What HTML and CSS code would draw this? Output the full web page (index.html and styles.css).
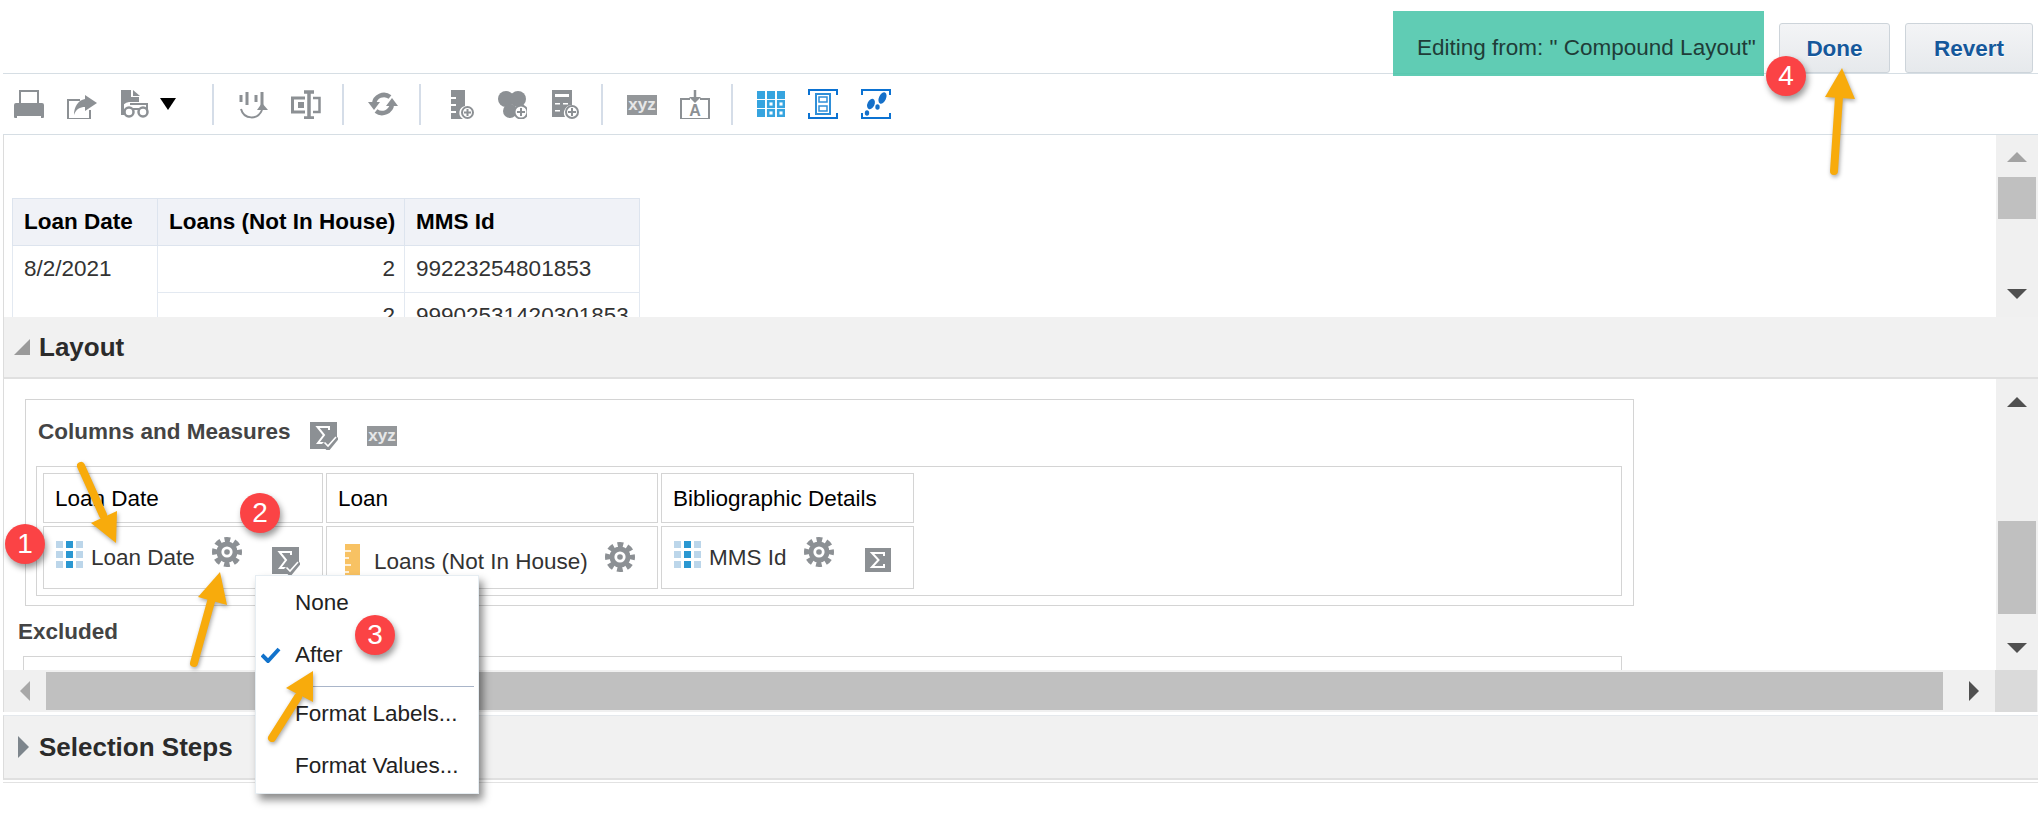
FILE: index.html
```html
<!DOCTYPE html>
<html lang="en">
<head>
<meta charset="utf-8">
<title>Compound Layout editor</title>
<link rel="stylesheet" href="styles.css">
</head>
<body>
<svg class="defs" aria-hidden="true">
  <symbol id="i-gear" viewBox="0 0 30 30">
    <circle cx="15" cy="15" r="12.2" fill="none" stroke="#8c9094" stroke-width="5.6" stroke-dasharray="5.6 3.98" stroke-dashoffset="2.8"/>
    <circle cx="15" cy="15" r="10.5" fill="#8c9094"/>
    <circle cx="15" cy="15" r="5.6" fill="#fff"/>
    <circle cx="15" cy="15" r="2.8" fill="#8c9094"/>
  </symbol>
  <symbol id="i-sigmacheck" viewBox="0 0 28 28">
    <path d="M0 0H27V17L18 27H0z" fill="#8c9094"/>
    <path d="M19 8V5H7.500L14 13L8 21H14" fill="none" stroke="#fff" stroke-width="2"/>
    <path d="M13 21L18 26L27 15" fill="none" stroke="#8c9094" stroke-width="5"/>
    <path d="M14.500 20.500L18 24L26 15" fill="none" stroke="#fff" stroke-width="1.600"/>
  </symbol>
  <symbol id="i-sigma" viewBox="0 0 26 24">
    <rect width="26" height="24" fill="#8c9094"/>
    <path d="M19 8V5H7L13.500 12L7 19H19V16" fill="none" stroke="#fff" stroke-width="2"/>
  </symbol>
  <symbol id="i-xyz" viewBox="0 0 30 20">
    <rect width="30" height="20" fill="#94979a"/>
    <text x="15" y="15" class="xyz-text" text-anchor="middle">xyz</text>
  </symbol>
  <symbol id="i-cols" viewBox="0 0 27 27">
    <g fill="#bcd6ea">
      <rect width="7" height="7"/><rect x="20" width="7" height="7"/>
      <rect y="10" width="7" height="7"/><rect x="20" y="10" width="7" height="7"/>
      <rect y="20" width="7" height="7"/><rect x="20" y="20" width="7" height="7"/>
    </g>
    <g fill="#2a97d1">
      <rect x="10" width="7" height="7"/><rect x="10" y="10" width="7" height="7"/><rect x="10" y="20" width="7" height="7"/>
    </g>
  </symbol>
  <symbol id="i-frame" viewBox="0 0 30 30">
    <path d="M1 6V1H29V6M1 24V29H29V24" fill="none" stroke="#0b72d2" stroke-width="2"/>
  </symbol>
</svg>

<div class="page">
  <header class="topbar">
    <div class="notice">Editing from: " Compound Layout"</div>
    <button class="btn btn-done">Done</button>
    <button class="btn btn-revert">Revert</button>
  </header>

  <nav class="toolbar">
    <div class="tb-group tb-first">
      <svg class="ic" viewBox="0 0 30 30"><path d="M6 14V2H24V14" fill="none" stroke="#8c9094" stroke-width="2"/><path d="M2 14H28Q30 14 30 16V28Q30 29 29 29H27V27H3V29H1Q0 29 0 28V16Q0 14 2 14z" fill="#8c9094"/><rect x="5" y="17" width="20" height="4" fill="#8c9094"/><path d="M3 23H27V27H3z" fill="#8c9094"/></svg>
      <svg class="ic" viewBox="0 0 30 30"><path d="M13 11H1V30H23V21" fill="none" stroke="#8c9094" stroke-width="2"/><path d="M18 6L30 14L18 22V18C13 18 9 20 7 26C7 18 11 11 18 10z" fill="#8c9094"/></svg>
      <svg class="ic" viewBox="0 0 30 30"><path d="M1 1H11V8H19V13H9Q3 14 1 20z" fill="#8c9094"/><path d="M13 1L20 7H13z" fill="#8c9094"/><rect x="1" y="14" width="3" height="12" fill="#8c9094"/><circle cx="9" cy="23" r="4.500" fill="none" stroke="#8c9094" stroke-width="2.500"/><circle cx="23" cy="23" r="4.500" fill="none" stroke="#8c9094" stroke-width="2.500"/><path d="M13 20H19M27 22V15H10" fill="none" stroke="#8c9094" stroke-width="2"/></svg>
      <span class="drop-tri"></span>
    </div>
    <span class="tb-sep"></span>
    <div class="tb-group">
      <svg class="ic" viewBox="0 0 30 30"><path d="M3 6V13M9 3V16M18 6V13M24 3V18" fill="none" stroke="#8c9094" stroke-width="3"/><path d="M3 20C6 31 20 31 24 21" fill="none" stroke="#8c9094" stroke-width="2"/><path d="M19 21H30L24 14z" fill="#8c9094"/></svg>
      <svg class="ic" viewBox="0 0 30 30"><path d="M14 9H1.500V23H14" fill="none" stroke="#8c9094" stroke-width="3"/><rect x="7" y="13" width="6" height="6" fill="#8c9094"/><path d="M22 9H28.500V23H22" fill="none" stroke="#8c9094" stroke-width="2.500"/><path d="M13 3H23M18 3V29M13 29H23" fill="none" stroke="#8c9094" stroke-width="3.500"/></svg>
    </div>
    <span class="tb-sep"></span>
    <div class="tb-group">
      <svg class="ic" viewBox="0 0 30 30"><path d="M6 15A10 10 0 0 1 22 8" fill="none" stroke="#8c9094" stroke-width="4.500"/><path d="M0 13H12L6 21z" fill="#8c9094"/><path d="M24 15A10 10 0 0 1 8 22" fill="none" stroke="#8c9094" stroke-width="4.500"/><path d="M18 17H30L24 9z" fill="#8c9094"/></svg>
    </div>
    <span class="tb-sep"></span>
    <div class="tb-group tb-shift">
      <svg class="ic ic-narrow" viewBox="0 0 23 30"><path d="M0 1H14V17A7 7 0 0 0 12 30H0V24H5V22H0V17H5V15H0V10H5V8H0z" fill="#8c9094"/><circle cx="16.500" cy="23.500" r="5.500" fill="#fff" stroke="#8c9094" stroke-width="2"/><path d="M13 23.500H20M16.500 20V27" stroke="#8c9094" stroke-width="2"/></svg>
      <svg class="ic" viewBox="0 0 30 30"><circle cx="9" cy="10" r="8" fill="#8c9094"/><circle cx="21" cy="10" r="8" fill="#8c9094"/><circle cx="13" cy="22" r="7" fill="#8c9094"/><circle cx="24" cy="23" r="6.500" fill="#fff" stroke="#8c9094" stroke-width="2"/><path d="M20 23H28M24 19V27" stroke="#8c9094" stroke-width="2"/></svg>
      <svg class="ic" viewBox="0 0 30 30"><path d="M2 1H22V16A8 8 0 0 0 15 28H2z" fill="#8c9094"/><path d="M5 5H19V8H5zM5 14H10V15.500H5zM13 14H18V15.500H13zM5 21H10V22.500H5z" fill="#fff"/><circle cx="22" cy="23" r="6" fill="#fff" stroke="#8c9094" stroke-width="2"/><path d="M18 23H26M22 19V27" stroke="#8c9094" stroke-width="2"/></svg>
    </div>
    <span class="tb-sep"></span>
    <div class="tb-group">
      <svg class="ic" viewBox="0 0 30 30"><use href="#i-xyz" y="6" width="30" height="20"/></svg>
      <svg class="ic" viewBox="0 0 30 30"><path d="M10 10H1V30H29V10H20" fill="none" stroke="#8c9094" stroke-width="2"/><path d="M15 1V10" stroke="#8c9094" stroke-width="2.500"/><path d="M9 8H21L15 14z" fill="#8c9094"/><text x="15" y="27" class="a-text" text-anchor="middle">A</text></svg>
    </div>
    <span class="tb-sep"></span>
    <div class="tb-group">
      <svg class="ic ic-grid" viewBox="0 0 28 26"><g fill="#36a4df"><rect width="8" height="8"/><rect x="10" width="8" height="8"/><rect x="20" width="8" height="8"/><rect y="9" width="8" height="8"/><rect y="18" width="8" height="8"/></g><g fill="#fff" stroke="#36a4df" stroke-width="2.500"><rect x="11.200" y="10.200" width="5.600" height="5.600"/><rect x="21.200" y="10.200" width="5.600" height="5.600"/><rect x="11.200" y="19.200" width="5.600" height="5.600"/><rect x="21.200" y="19.200" width="5.600" height="5.600"/></g></svg>
      <svg class="ic" viewBox="0 0 30 30"><use href="#i-frame" width="30" height="30"/><rect x="8" y="5" width="14" height="20" fill="none" stroke="#2f8fd8" stroke-width="2"/><rect x="11" y="8" width="8" height="5" fill="none" stroke="#2f8fd8" stroke-width="1.500"/><rect x="11" y="17" width="8" height="5" fill="none" stroke="#2f8fd8" stroke-width="1.500"/></svg>
      <svg class="ic" viewBox="0 0 30 30"><use href="#i-frame" width="30" height="30"/><g fill="#1570c9"><ellipse cx="21.500" cy="9" rx="3.500" ry="6" transform="rotate(25 21.500 9)"/><ellipse cx="16.500" cy="18" rx="2.200" ry="2.700"/><ellipse cx="10" cy="15" rx="3.500" ry="5.500" transform="rotate(25 10 15)"/><ellipse cx="6" cy="24" rx="2.200" ry="2.700"/></g></svg>
    </div>
  </nav>

  <section class="pane pane-preview">
    <div class="pane-body">
      <table class="result">
        <thead>
          <tr><th class="col-a">Loan Date</th><th class="col-b">Loans (Not In House)</th><th class="col-c">MMS Id</th></tr>
        </thead>
        <tbody>
          <tr><td rowspan="2">8/2/2021</td><td class="num">2</td><td>99223254801853</td></tr>
          <tr><td class="num">2</td><td>99902531420301853</td></tr>
        </tbody>
      </table>
    </div>
    <div class="vscroll vscroll-top">
      <span class="arr-up arr-light"></span>
      <span class="thumb"></span>
      <span class="arr-down"></span>
    </div>
  </section>

  <div class="section-head section-layout">
    <span class="tri-open"></span>
    <span class="section-title">Layout</span>
  </div>

  <section class="pane pane-layout">
    <div class="pane-body">
      <div class="outer-box">
        <div class="box-title">
          <span class="box-title-text">Columns and Measures</span>
          <svg class="t-sigma"><use href="#i-sigmacheck"/></svg>
          <svg class="t-xyz"><use href="#i-xyz"/></svg>
        </div>
        <div class="grid-box">
          <div class="cell cell-h">Loan Date</div>
          <div class="cell cell-h">Loan</div>
          <div class="cell cell-h">Bibliographic Details</div>
          <div class="cell cell-d">
            <svg class="f-cols"><use href="#i-cols"/></svg>
            <span class="f-label">Loan Date</span>
            <svg class="f-gear"><use href="#i-gear"/></svg>
            <svg class="f-sigma"><use href="#i-sigmacheck"/></svg>
          </div>
          <div class="cell cell-d cell-measure">
            <svg class="f-ruler" viewBox="0 0 15 32"><rect width="15" height="32" fill="#f8c263"/><path d="M0 7H6M0 14H4M0 21H6M0 28H4" stroke="#fff" stroke-width="1.500"/></svg>
            <span class="f-label f-label-low">Loans (Not In House)</span>
            <svg class="f-gear f-gear-low"><use href="#i-gear"/></svg>
          </div>
          <div class="cell cell-d">
            <svg class="f-cols f-cols-mms"><use href="#i-cols"/></svg>
            <span class="f-label">MMS Id</span>
            <svg class="f-gear"><use href="#i-gear"/></svg>
            <svg class="f-sigmabox"><use href="#i-sigma"/></svg>
          </div>
        </div>
      </div>
      <div class="excluded-title">Excluded</div>
      <div class="excluded-box"></div>
    </div>
    <div class="vscroll vscroll-layout">
      <span class="arr-up"></span>
      <span class="thumb"></span>
      <span class="arr-down"></span>
    </div>
  </section>

  <div class="hscroll">
    <span class="arr-left"></span>
    <span class="hthumb"></span>
    <span class="arr-right"></span>
    <span class="corner"></span>
  </div>

  <div class="section-head section-steps">
    <span class="tri-closed"></span>
    <span class="section-title">Selection Steps</span>
  </div>
  <div class="end-rule"></div>

  <div class="menu">
    <div class="menu-item">None</div>
    <div class="menu-item menu-checked">
      <svg class="check" viewBox="0 0 20 16"><path d="M1 8L7 14L18 2" fill="none" stroke="#1273cc" stroke-width="4"/></svg>
      <span>After</span>
    </div>
    <div class="menu-sep"></div>
    <div class="menu-item">Format Labels...</div>
    <div class="menu-item">Format Values...</div>
  </div>

  <svg class="arrows" viewBox="0 0 2040 817" aria-hidden="true">
    <g class="arrow">
      <path d="M81 466L103 515" class="shaft"/><path d="M116 543L91 523L117 511z" class="head"/>
      <path d="M194 663L212 598" class="shaft"/><path d="M220 572L198 597L227 605z" class="head"/>
      <path d="M272 738L298 697" class="shaft"/><path d="M313 671L286 688L313 702z" class="head"/>
      <path d="M1834 171L1839 97" class="shaft"/><path d="M1842 68L1825 97L1855 99z" class="head"/>
    </g>
  </svg>

  <span class="badge badge-1">1</span>
  <span class="badge badge-2">2</span>
  <span class="badge badge-3">3</span>
  <span class="badge badge-4">4</span>
</div>
</body>
</html>
```

FILE: styles.css
```css
* { box-sizing: border-box; }

html, body {
  margin: 0;
  padding: 0;
  background: #fff;
}

body {
  font-family: "Liberation Sans", Arial, sans-serif;
  font-size: 22.5px;
  color: #333;
  overflow: hidden;
}

.defs { display: none; }

.page {
  position: relative;
  width: 2040px;
  height: 817px;
  padding: 0 2px 0 3px;
  overflow: hidden;
}

/* top bar */
.topbar {
  display: flex;
  justify-content: flex-end;
  align-items: flex-end;
  height: 74px;
  padding-right: 5px;
  border-bottom: 1px solid #d6dee4;
}

.notice {
  width: 371px;
  height: 65px;
  margin-right: 15px;
  margin-bottom: -3px;
  padding: 24px 0 0 24px;
  line-height: 26px;
  color: #1f3d38;
  background: rgba(70, 196, 168, 0.86);
  white-space: nowrap;
}

.btn {
  height: 50px;
  padding: 1px 0 0;
  font: bold 22.5px "Liberation Sans", Arial, sans-serif;
  color: #15589b;
  text-shadow: 0 1px 0 #fff;
  background: linear-gradient(#f3f4f6, #e6e9ec);
  border: 1px solid #cdd4da;
  border-radius: 3px;
}

.btn-done { width: 111px; margin-right: 15px; }
.btn-revert { width: 128px; }

/* toolbar */
.toolbar {
  display: flex;
  align-items: center;
  height: 61px;
  padding-left: 11px;
  border-bottom: 1px solid #d6dee4;
}

.tb-group {
  display: flex;
  align-items: center;
  gap: 23px;
}

.tb-first { margin-right: 15px; }
.tb-shift { margin-left: 6px; }

.ic { width: 30px; height: 30px; flex: none; }
.ic-narrow { width: 23px; }
.ic-grid { width: 28px; height: 26px; }

.drop-tri {
  width: 0;
  height: 0;
  margin-left: -13px;
  border-left: 8px solid transparent;
  border-right: 8px solid transparent;
  border-top: 12px solid #000;
}

.tb-sep {
  width: 2px;
  height: 41px;
  margin: 0 24px 0 21px;
  background: #d5dde8;
}

.xyz-text {
  font: bold 17px "Liberation Sans", Arial, sans-serif;
  fill: #e6e7e8;
}

.a-text {
  font: bold 16px "Liberation Sans", Arial, sans-serif;
  fill: #8c9094;
}

/* panes */
.pane {
  display: flex;
  border-left: 1px solid #dcdcdc;
}

.pane-body {
  flex: 1;
  min-width: 0;
  overflow: hidden;
}

.pane-preview { height: 182px; }
.pane-preview .pane-body { padding: 63px 0 0 8px; }
.pane-layout { height: 291px; }
.pane-layout .pane-body { padding-top: 20px; }

/* table */
.result {
  border-collapse: collapse;
  table-layout: fixed;
  width: 627px;
  line-height: 26px;
}

.result th, .result td {
  height: 47px;
  padding: 0 11px;
  border: 1px solid #e3e9f1;
  text-align: left;
  white-space: nowrap;
}

.result th {
  color: #000;
  font-weight: bold;
  background: #f0f2f7;
  border-color: #dde4ee;
}

.result td { vertical-align: middle; }
.result td[rowspan] { vertical-align: top; padding-top: 10px; }
.result td.num { text-align: right; padding-right: 9px; }
.col-a { width: 145px; }
.col-b { width: 247px; }
.col-c { width: 235px; }

/* scrollbars */
.vscroll {
  display: flex;
  flex-direction: column;
  align-items: center;
  flex: none;
  width: 42px;
  background: #f0f0f0;
}

.thumb {
  width: 38px;
  background: #c0c0c0;
}

.arr-up, .arr-down {
  width: 0;
  height: 0;
  border-left: 10px solid transparent;
  border-right: 10px solid transparent;
}

.arr-up { border-bottom: 10px solid #505050; }
.arr-down { border-top: 10px solid #505050; }
.arr-up.arr-light { border-bottom-color: #a3a3a3; }

.vscroll-top { padding-top: 17px; }
.vscroll-top .thumb { height: 42px; margin-top: 15px; }
.vscroll-top .arr-down { margin-top: 70px; }

.vscroll-layout { padding-top: 18px; }
.vscroll-layout .thumb { height: 93px; margin-top: 114px; }
.vscroll-layout .arr-down { margin-top: 29px; }

.hscroll {
  display: flex;
  align-items: center;
  height: 42px;
  background: #f0f0f0;
  border-left: 1px solid #dcdcdc;
}

.hthumb {
  width: 1897px;
  height: 38px;
  margin-left: 16px;
  background: #c0c0c0;
}

.arr-left, .arr-right {
  width: 0;
  height: 0;
  border-top: 10px solid transparent;
  border-bottom: 10px solid transparent;
}

.arr-left {
  margin-left: 16px;
  border-right: 10px solid #a8a8a8;
}

.arr-right {
  margin-left: 26px;
  border-left: 10px solid #505050;
}

.corner {
  width: 42px;
  height: 42px;
  margin-left: 16px;
  background: #dadada;
}

/* collapsible section headers */
.section-head {
  display: flex;
  align-items: center;
  background: #f1f1f1;
  border-left: 1px solid #dcdcdc;
  border-bottom: 2px solid #e0e0e0;
}

.section-layout { height: 62px; gap: 9px; padding-left: 10px; }

.section-steps {
  height: 65px;
  margin-top: 3px;
  gap: 10px;
  padding-left: 14px;
  border-top: 1px solid #e4e8ec;
}

.end-rule {
  height: 1px;
  margin-top: 2px;
  background: #e2e2e2;
}

.section-title {
  font-size: 26px;
  font-weight: bold;
  color: #2b2b2b;
}

.tri-open {
  width: 0;
  height: 0;
  border-left: 16px solid transparent;
  border-bottom: 16px solid #9a9a9a;
}

.tri-closed {
  width: 0;
  height: 0;
  border-top: 11px solid transparent;
  border-bottom: 11px solid transparent;
  border-left: 11px solid #7d858c;
}

/* layout editor */
.outer-box {
  width: 1609px;
  height: 207px;
  margin-left: 21px;
  border: 1px solid #d4d4d4;
}

.box-title {
  display: flex;
  align-items: flex-start;
  height: 66px;
  padding-left: 12px;
}

.box-title-text {
  margin-top: 19px;
  line-height: 26px;
  font-weight: bold;
  color: #444;
}

.t-sigma { width: 28px; height: 28px; margin: 22px 0 0 19px; }
.t-xyz { width: 30px; height: 20px; margin: 26px 0 0 29px; }

.grid-box {
  display: grid;
  grid-template-columns: 280px 332px 253px;
  grid-template-rows: 50px 63px;
  gap: 3px;
  width: 1586px;
  height: 130px;
  margin-left: 10px;
  padding: 6px;
  border: 1px solid #d4d4d4;
}

.cell {
  border: 1px solid #d4d4d4;
}

.cell-h {
  display: flex;
  align-items: center;
  padding: 1px 0 0 11px;
  color: #000;
}

.cell-d {
  display: flex;
  align-items: flex-start;
  padding-left: 12px;
}

.cell-measure { padding-left: 18px; }

.f-cols { width: 27px; height: 27px; margin: 14px 8px 0 0; flex: none; }
.f-cols-mms { width: 27px; }
.f-ruler { width: 15px; height: 32px; margin: 17px 14px 0 0; flex: none; }
.f-label { margin-top: 18px; line-height: 26px; white-space: nowrap; }
.f-label-low { margin-top: 22px; }
.f-gear { width: 30px; height: 30px; margin: 10px 0 0 17px; flex: none; }
.f-gear-low { margin: 15px 0 0 17px; }
.f-sigma { width: 28px; height: 28px; margin: 20px 0 0 30px; flex: none; }
.f-sigmabox { width: 26px; height: 24px; margin: 21px 0 0 31px; flex: none; }

.excluded-title {
  margin: 13px 0 0 14px;
  line-height: 26px;
  font-weight: bold;
  color: #444;
}

.excluded-box {
  width: 1599px;
  height: 40px;
  margin: 11px 0 0 19px;
  border: 1px solid #d4d4d4;
}

/* popup menu */
.menu {
  position: absolute;
  left: 255px;
  top: 575px;
  width: 224px;
  height: 219px;
  background: #fff;
  border: 1px solid #e6edf2;
  box-shadow: 4px 6px 8px rgba(0, 0, 0, 0.45);
  color: #222;
}

.menu-item {
  height: 52px;
  padding: 1px 0 0 39px;
  line-height: 52px;
  white-space: nowrap;
}

.menu-checked {
  display: flex;
  align-items: center;
  padding: 2px 0 0 5px;
}

.check { width: 20px; height: 16px; margin-right: 14px; flex: none; }

.menu-sep {
  height: 1px;
  margin: 6px 4px 0 40px;
  background: #a9b5c9;
}

/* annotations */
.arrows {
  position: absolute;
  left: 0;
  top: 0;
  width: 2040px;
  height: 817px;
  pointer-events: none;
}

.arrow { filter: drop-shadow(1px 2px 2px rgba(0, 0, 0, 0.35)); }
.shaft { fill: none; stroke: #f8ab0c; stroke-width: 8; stroke-linecap: round; }
.head { fill: #f8ab0c; }

.badge {
  position: absolute;
  width: 40px;
  height: 40px;
  line-height: 40px;
  text-align: center;
  font-size: 28px;
  color: #fff;
  background: #fb4345;
  border-radius: 50%;
  box-shadow: 2px 4px 6px rgba(0, 0, 0, 0.4);
}

.badge-1 { left: 5px; top: 524px; }
.badge-2 { left: 240px; top: 493px; }
.badge-3 { left: 355px; top: 615px; }
.badge-4 { left: 1766px; top: 56px; }
```
